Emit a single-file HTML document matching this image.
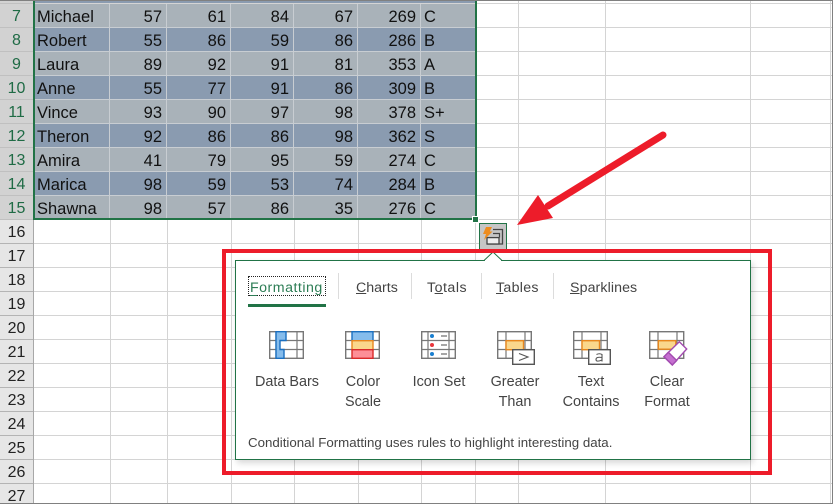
<!DOCTYPE html>
<html><head><meta charset="utf-8">
<style>
html,body{margin:0;padding:0;background:#fff}
#p{position:relative;width:833px;height:504px;overflow:hidden;background:#fff;font-family:"Liberation Sans",sans-serif}
.a{position:absolute}
.h{position:absolute;left:34px;right:0;height:1px;background:#d4d4d4}
.v{position:absolute;top:0;bottom:0;width:1px;background:#d4d4d4}
.n{position:absolute;left:0;width:33px;height:23px;line-height:26px;text-align:center;font-size:16px;background:#e6e6e6;color:#222;border-bottom:1px solid #b4b4b4;overflow:hidden}
.n.s{background:#d2d2d2;color:#1f6b45;border-bottom:1px solid #c0c0c0}
table{position:absolute;left:35px;top:4px;border-collapse:separate;border-spacing:0;table-layout:fixed;width:440px;font-size:16.5px;color:#111}
td{height:19px;padding:4px 4px 0 0;border-right:1px solid #c8cdd2;border-bottom:1px solid #c8cdd2;text-align:right;line-height:19px;background:#a9b2b9;overflow:hidden;box-sizing:content-box}
tr.d td{background:#8a9bb0}
td:first-child,td:last-child{text-align:left}
td:first-child{padding:4px 0 0 2px}
td:last-child{padding:4px 0 0 3px;border-right:0}
.l{position:absolute;top:372px;width:76px;text-align:center;font-size:14.4px;line-height:20px;color:#444}
.t{position:absolute;top:279px;font-size:14.2px;line-height:18px;color:#444}
.t u{text-decoration:underline}
.sep{position:absolute;top:273px;width:1px;height:26px;background:#dcdcdc}
svg{position:absolute;overflow:visible}
</style></head><body>
<div id="p">
<div class="h" style="top:3px"></div><div class="h" style="top:27px"></div><div class="h" style="top:51px"></div><div class="h" style="top:75px"></div><div class="h" style="top:99px"></div><div class="h" style="top:123px"></div><div class="h" style="top:147px"></div><div class="h" style="top:171px"></div><div class="h" style="top:195px"></div><div class="h" style="top:219px"></div><div class="h" style="top:243px"></div><div class="h" style="top:267px"></div><div class="h" style="top:291px"></div><div class="h" style="top:315px"></div><div class="h" style="top:339px"></div><div class="h" style="top:363px"></div><div class="h" style="top:387px"></div><div class="h" style="top:411px"></div><div class="h" style="top:435px"></div><div class="h" style="top:459px"></div><div class="h" style="top:483px"></div>
<div class="v" style="left:110px"></div><div class="v" style="left:167px"></div><div class="v" style="left:231px"></div><div class="v" style="left:294px"></div><div class="v" style="left:358px"></div><div class="v" style="left:421px"></div><div class="v" style="left:475px"></div><div class="v" style="left:518px"></div><div class="v" style="left:605px"></div><div class="v" style="left:750px"></div><div class="v" style="left:830px"></div>
<div class="a" style="left:832px;top:0;width:1px;height:504px;background:#808080"></div>
<div class="a" style="left:0;top:0;width:833px;height:1px;background:#808080"></div>

<div class="a" style="left:35px;top:1px;width:440px;height:2px;background:#8a9bb0"></div>
<table>
<colgroup><col style="width:75px"><col style="width:57px"><col style="width:64px"><col style="width:63px"><col style="width:64px"><col style="width:63px"><col style="width:54px"></colgroup>
<tr><td>Michael</td><td>57</td><td>61</td><td>84</td><td>67</td><td>269</td><td>C</td></tr>
<tr class="d"><td>Robert</td><td>55</td><td>86</td><td>59</td><td>86</td><td>286</td><td>B</td></tr>
<tr><td>Laura</td><td>89</td><td>92</td><td>91</td><td>81</td><td>353</td><td>A</td></tr>
<tr class="d"><td>Anne</td><td>55</td><td>77</td><td>91</td><td>86</td><td>309</td><td>B</td></tr>
<tr><td>Vince</td><td>93</td><td>90</td><td>97</td><td>98</td><td>378</td><td>S+</td></tr>
<tr class="d"><td>Theron</td><td>92</td><td>86</td><td>86</td><td>98</td><td>362</td><td>S</td></tr>
<tr><td>Amira</td><td>41</td><td>79</td><td>95</td><td>59</td><td>274</td><td>C</td></tr>
<tr class="d"><td>Marica</td><td>98</td><td>59</td><td>53</td><td>74</td><td>284</td><td>B</td></tr>
<tr><td>Shawna</td><td>98</td><td>57</td><td>86</td><td>35</td><td>276</td><td>C</td></tr>
</table>

<div class="a" style="left:0;top:0;width:33px;height:504px;background:#e6e6e6"></div>
<div class="n s" style="top:1px;height:2px;line-height:2px"></div>
<div class="n s" style="top:4px">7</div><div class="n s" style="top:28px">8</div><div class="n s" style="top:52px">9</div><div class="n s" style="top:76px">10</div><div class="n s" style="top:100px">11</div><div class="n s" style="top:124px">12</div><div class="n s" style="top:148px">13</div><div class="n s" style="top:172px">14</div><div class="n s" style="top:196px">15</div>
<div class="n" style="top:220px">16</div><div class="n" style="top:244px">17</div><div class="n" style="top:268px">18</div><div class="n" style="top:292px">19</div><div class="n" style="top:316px">20</div><div class="n" style="top:340px">21</div><div class="n" style="top:364px">22</div><div class="n" style="top:388px">23</div><div class="n" style="top:412px">24</div><div class="n" style="top:436px">25</div><div class="n" style="top:460px">26</div><div class="n" style="top:484px">27</div>
<div class="a" style="left:33px;top:220px;width:1px;height:284px;background:#a8a8a8"></div>
<div class="a" style="left:0;top:503px;width:833px;height:1px;background:#808080"></div>
<div class="a" style="left:0;top:0;width:833px;height:1px;background:#808080"></div>

<!-- selection -->
<div class="a" style="left:33px;top:1px;width:2px;height:219px;background:#217346"></div>
<div class="a" style="left:33px;top:218px;width:444px;height:2px;background:#217346"></div>
<div class="a" style="left:475px;top:1px;width:2px;height:219px;background:#217346"></div>
<div class="a" style="left:472px;top:216px;width:7px;height:7px;background:#217346;border:1px solid #fff;box-sizing:border-box"></div>

<!-- quick analysis button -->
<div class="a" style="left:479px;top:223px;width:28px;height:27px;background:#c6c6c6;border:1px solid #217346;box-sizing:border-box"></div>
<svg style="left:479px;top:223px" width="28" height="27" viewBox="0 0 28 27">
<path d="M14 6.5H23.5V21H8" fill="none" stroke="#444" stroke-width="1.3"/>
<path d="M14 10.5H20.5V14.5" fill="none" stroke="#444" stroke-width="1.2"/>
<rect x="8" y="14.6" width="12" height="6.4" fill="#eee" stroke="#444" stroke-width="1.3"/>
<path d="M7 4H13L10.8 8.5H13.5L5 17L7 11H4Z" fill="#ee8c1e"/>
</svg>

<!-- panel -->
<div class="a" style="left:235px;top:260px;width:516px;height:200px;box-sizing:border-box;background:#fff;border:1px solid #217346;box-shadow:2px 3px 6px rgba(0,0,0,.16)"></div>
<svg style="left:480px;top:250px" width="26" height="12" viewBox="0 0 26 12">
<path d="M4 10.5L13 2L22 10.5" fill="#fff" stroke="#217346" stroke-width="1"/>
<rect x="5" y="10" width="16" height="2" fill="#fff"/>
</svg>

<div class="t" style="left:250px;color:#2d7d55;letter-spacing:.5px">Formatting</div>
<div class="a" style="left:248px;top:276px;width:78px;height:20px;box-sizing:border-box;border:1px dotted #222"></div>
<div class="a" style="left:248px;top:304px;width:78px;height:3px;background:#217346"></div>
<div class="a" style="left:250px;top:295px;width:7px;height:1px;background:#2d7d55"></div>
<div class="sep" style="left:338px"></div><div class="sep" style="left:411px"></div><div class="sep" style="left:481px"></div><div class="sep" style="left:553px"></div>
<div class="t" style="left:356px"><u>C</u>harts</div>
<div class="t" style="left:427px;letter-spacing:.5px">T<u>o</u>tals</div>
<div class="t" style="left:496px;letter-spacing:.3px"><u>T</u>ables</div>
<div class="t" style="left:570px;letter-spacing:.1px"><u>S</u>parklines</div>

<!-- icons -->
<svg style="left:269px;top:331px" width="35" height="28" viewBox="0 0 35 28" fill="none">
<rect x=".7" y=".7" width="33.6" height="26.6" fill="#fff" stroke="#777" stroke-width="1.4"/>
<path d="M7 1V27M28 1V27M1 9.5H34M1 18.5H34" stroke="#777" stroke-width="1.2"/>
<path d="M7 .7H17V9.5H11V18.5H15V27.3H7Z" fill="#85bcec" stroke="#1a6fc0" stroke-width="1.4"/>
</svg>
<svg style="left:345px;top:331px" width="35" height="28" viewBox="0 0 35 28" fill="none">
<rect x=".7" y=".7" width="33.6" height="26.6" fill="#fff" stroke="#777" stroke-width="1.4"/>
<path d="M1 9.5H34M1 18.5H34" stroke="#777" stroke-width="1.2"/>
<rect x="7" y=".7" width="21" height="9" fill="#85bcec" stroke="#1a6fc0" stroke-width="1.4"/>
<rect x="7" y="9.7" width="21" height="9" fill="#fad78c" stroke="#e8871e" stroke-width="1.4"/>
<rect x="7" y="18.7" width="21" height="8.6" fill="#fd8f97" stroke="#d92a2a" stroke-width="1.4"/>
</svg>
<svg style="left:421px;top:331px" width="35" height="28" viewBox="0 0 35 28" fill="none">
<rect x=".7" y=".7" width="33.6" height="26.6" fill="#fff" stroke="#777" stroke-width="1.4"/>
<path d="M7 1V27M28 1V27M1 9.5H34M1 18.5H34" stroke="#777" stroke-width="1.2"/>
<path d="M20 5H26M20 14H26M20 23H26" stroke="#888" stroke-width="1.4"/>
<circle cx="11" cy="5" r="2" fill="#1a7fd0"/><circle cx="11" cy="14" r="2" fill="#e8363c"/><circle cx="11" cy="23" r="2" fill="#1a7fd0"/>
</svg>
<svg style="left:497px;top:331px" width="38" height="34" viewBox="0 0 38 34" fill="none">
<rect x=".7" y=".7" width="33.6" height="26.6" fill="#fff" stroke="#777" stroke-width="1.4"/>
<path d="M9 1V27M28 1V27M1 9.5H34M1 18.5H34" stroke="#777" stroke-width="1.2"/>
<rect x="9" y="9.7" width="17.5" height="9" fill="#fad78c" stroke="#e8871e" stroke-width="1.4"/>
<rect x="15.7" y="18.7" width="21.6" height="14.6" fill="#fff" stroke="#555" stroke-width="1.4"/>
<path d="M22 22.5L31 26L22 29.5" stroke="#555" stroke-width="1.1"/>
</svg>
<svg style="left:573px;top:331px" width="38" height="34" viewBox="0 0 38 34" fill="none">
<rect x=".7" y=".7" width="33.6" height="26.6" fill="#fff" stroke="#777" stroke-width="1.4"/>
<path d="M9 1V27M28 1V27M1 9.5H34M1 18.5H34" stroke="#777" stroke-width="1.2"/>
<rect x="9" y="9.7" width="17.5" height="9" fill="#fad78c" stroke="#e8871e" stroke-width="1.4"/>
<rect x="15.7" y="18.7" width="21.6" height="14.6" fill="#fff" stroke="#555" stroke-width="1.4"/>
<path d="M23.5 23.5Q26.5 22 29 23.5V30.5M29 26.5Q23 25.5 23 28.5T29 29" stroke="#555" stroke-width="1.1"/>
</svg>
<svg style="left:649px;top:331px" width="38" height="34" viewBox="0 0 38 34" fill="none">
<rect x=".7" y=".7" width="34" height="26.6" fill="#fff" stroke="#777" stroke-width="1.4"/>
<path d="M9 1V27M28 1V27M1 9.5H34M1 18.5H34" stroke="#777" stroke-width="1.2"/>
<rect x="9.3" y="9.7" width="17.5" height="8.5" fill="#fad78c" stroke="#e8871e" stroke-width="1.4"/>
<path d="M30.3 10.7L37.7 18L23.3 34L15 25.7Z" fill="#fff" stroke="#a24bb0" stroke-width="1.4"/>
<path d="M19.3 21.3L27.7 29.5L23.3 34L15 25.7Z" fill="#c56fd0" stroke="#a24bb0" stroke-width="1.4"/>
</svg>

<!-- labels -->
<div class="l" style="left:249px">Data Bars</div>
<div class="l" style="left:325px">Color<br>Scale</div>
<div class="l" style="left:401px">Icon Set</div>
<div class="l" style="left:477px">Greater<br>Than</div>
<div class="l" style="left:553px">Text<br>Contains</div>
<div class="l" style="left:629px">Clear<br>Format</div>
<div class="a" style="left:248px;top:435px;font-size:13.3px;line-height:16px;color:#444;white-space:nowrap">Conditional Formatting uses rules to highlight interesting data.</div>

<!-- annotations -->
<div class="a" style="left:222px;top:249px;width:550px;height:226px;box-sizing:border-box;border:4px solid #ed1c2a"></div>
<svg style="left:0;top:0" width="833" height="504" viewBox="0 0 833 504">
<path d="M548 206L663 135" stroke="#ed1c2a" stroke-width="7" stroke-linecap="round"/>
<path d="M517 225L538 195L553 218Z" fill="#ed1c2a"/>
</svg>
</div>
</body></html>
